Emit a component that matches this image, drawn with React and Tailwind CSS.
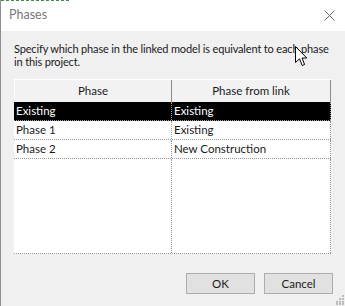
import React from "react";

const rows = [
  { phase: "Existing", link: "Existing", selected: true },
  { phase: "Phase 1", link: "Existing" },
  { phase: "Phase 2", link: "New Construction" },
];

const CloseIcon = () => (
  <svg width="11" height="11" viewBox="0 0 11 11" className="block">
    <path d="M0.5 0.5 L10.5 10.5 M10.5 0.5 L0.5 10.5" stroke="#6b6b6b" strokeWidth="1" />
  </svg>
);

const Cursor = () => (
  <svg width="13" height="21" viewBox="0 0 13 21" className="absolute left-[294px] top-[46px]">
    <path
      d="M0.5 0.5 L0.5 16.5 L4.5 12.8 L7.2 19.5 L9.6 18.5 L7 12 L11.8 12 Z"
      fill="#ffffff"
      stroke="#000000"
      strokeWidth="1"
      strokeLinejoin="miter"
    />
  </svg>
);

const Grip = () => (
  <svg width="10" height="10" viewBox="0 0 10 10" className="absolute right-[1px] bottom-[1px]">
    {[
      [8, 0], [8, 3], [5, 3], [8, 6], [5, 6], [2, 6], [8, 8], [5, 8], [2, 8],
    ].map(([x, y], i) => (
      <rect key={i} x={x} y={y} width="2" height="2" fill="#bdbdbd" />
    ))}
  </svg>
);

export default function App() {
  return (
    <div
      className="relative w-[345px] h-[306px] overflow-hidden bg-[#f0f0f0] border-l border-[#8f8f8f] text-[11.5px] text-[#1a1a1a]"
      style={{ fontFamily: 'Lato, "Noto Sans", sans-serif' }}
    >
      <div className="absolute top-0 left-0 w-[68px] border-t border-dashed border-[#4a8a4a]" />

      <div className="h-[31px] bg-white flex items-center justify-between pl-[8px] pr-[10px]">
        <span className="text-[12.5px] text-[#7a7a7a]">Phases</span>
        <CloseIcon />
      </div>

      <div className="px-[13px] pt-[11px]">
        <p className="leading-[13px] text-[11px] tracking-[-0.15px]">
          Specify which phase in the linked model is equivalent to each phase in this project.
        </p>

        <div className="mt-[11px] w-[317px] h-[175px] bg-white flex flex-col border-b border-dotted border-[#9a9a9a]">
          <div className="flex h-[23px] bg-[#f2f2f2] border-t border-l border-white">
            <div className="w-[157px] flex items-center justify-center border-r border-[#8a8a8a]">Phase</div>
            <div className="w-[159px] flex items-center justify-center border-r border-[#8a8a8a]">Phase from link</div>
          </div>
          {rows.map((row) => (
            <div
              key={row.phase}
              className={`flex h-[19px] border-b border-dotted border-[#9a9a9a] ${
                row.selected ? "bg-black text-white" : "bg-white"
              }`}
            >
              <div className="w-[158px] flex items-center pl-[2px] border-r border-dotted border-[#9a9a9a]">{row.phase}</div>
              <div className="w-[159px] flex items-center pl-[2px] border-r border-dotted border-[#9a9a9a]">{row.link}</div>
            </div>
          ))}
          <div className="flex flex-1">
            <div className="w-[158px] border-r border-dotted border-[#9a9a9a]" />
            <div className="w-[159px] border-r border-dotted border-[#9a9a9a]" />
          </div>
        </div>

        <div className="flex justify-end gap-[9px] mt-[19px] mr-[-1px]">
          <button className="w-[69px] h-[21px] bg-[#e1e1e1] border border-[#adadad]">OK</button>
          <button className="w-[69px] h-[21px] bg-[#e1e1e1] border border-[#adadad]">Cancel</button>
        </div>
      </div>

      <Cursor />
      <Grip />
    </div>
  );
}
